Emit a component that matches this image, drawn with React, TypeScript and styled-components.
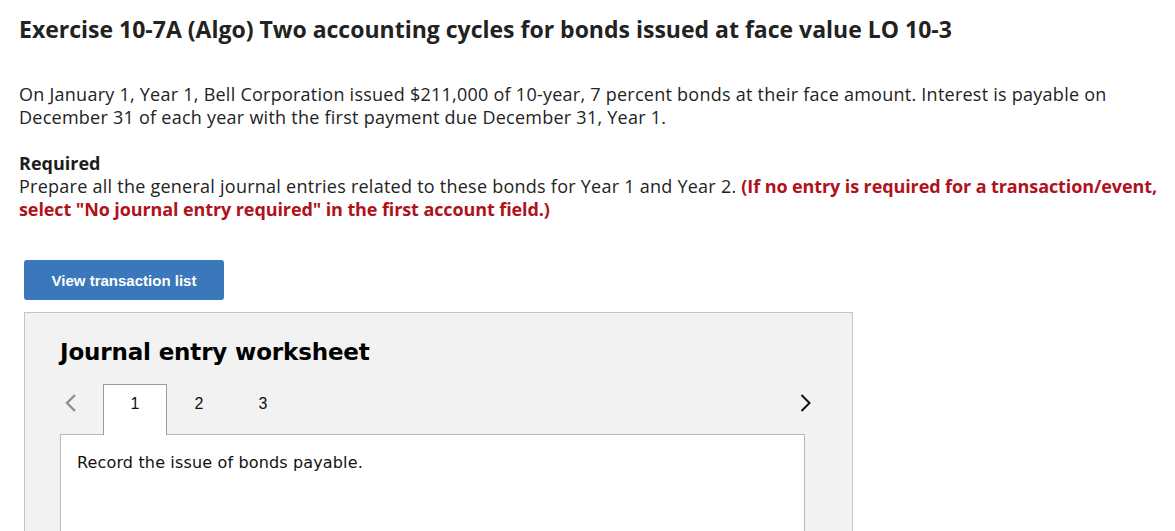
import React from "react";
import styled, { createGlobalStyle } from "styled-components";

const GlobalStyle = createGlobalStyle`
  html, body {
    margin: 0;
    padding: 0;
    background: #ffffff;
  }
  body {
    font-family: "Open Sans", "Lato", sans-serif;
    color: #1f1f1f;
  }
`;

const App: React.FC = () => {
  return (
    <>
      <GlobalStyle />
      <Page>
        <Title>Exercise 10-7A (Algo) Two accounting cycles for bonds issued at face value LO 10-3</Title>

        <Intro>
          On January 1, Year 1, Bell Corporation issued $211,000 of 10-year, 7 percent bonds at their face amount. Interest is payable on
          December 31 of each year with the first payment due December 31, Year 1.
        </Intro>

        <Required>
          <RequiredLabel>Required</RequiredLabel>
          Prepare all the general journal entries related to these bonds for Year 1 and Year 2.{" "}
          <Note>
            (If no entry is required for a transaction/event, select "No journal entry required" in the first account field.)
          </Note>
        </Required>

        <ListButton type="button">View transaction list</ListButton>

        <Worksheet>
          <WorksheetTitle>Journal entry worksheet</WorksheetTitle>

          <TabRow>
            <Arrow $muted aria-label="Previous">
              <svg width="13" height="20" viewBox="0 0 13 20">
                <path d="M11 2 L3 10 L11 18" fill="none" stroke="currentColor" strokeWidth="2.4" />
              </svg>
            </Arrow>
            <Tabs>
              <Tab $active>1</Tab>
              <Tab>2</Tab>
              <Tab>3</Tab>
            </Tabs>
            <Arrow aria-label="Next">
              <svg width="13" height="20" viewBox="0 0 13 20">
                <path d="M2.5 2 L10.5 10 L2.5 18" fill="none" stroke="currentColor" strokeWidth="2" />
              </svg>
            </Arrow>
          </TabRow>

          <EntryBox>
            <EntryText>Record the issue of bonds payable.</EntryText>
          </EntryBox>
        </Worksheet>
      </Page>
    </>
  );
};

const Page = styled.main`
  padding: 15px 0 0 19px;
`;

const Title = styled.h1`
  margin: 0;
  font-size: 23px;
  font-weight: 700;
  line-height: 29px;
  color: #222222;
`;

const Intro = styled.p`
  margin: 39px 0 0;
  font-size: 18px;
  line-height: 23px;
  letter-spacing: 0.25px;
  color: #232323;
`;

const Required = styled.p`
  margin: 23px 0 0;
  font-size: 18px;
  line-height: 23px;
  letter-spacing: 0.25px;
  color: #232323;
`;

const RequiredLabel = styled.strong`
  display: block;
  font-weight: 700;
  letter-spacing: 0;
  color: #1c1c1c;
`;

const Note = styled.strong`
  font-weight: 700;
  letter-spacing: -0.1px;
  color: #b0121b;
`;

const ListButton = styled.button`
  display: block;
  margin: 39px 0 0 5px;
  width: 200px;
  height: 40px;
  border: none;
  border-radius: 3px;
  background: #3a77bb;
  color: #ffffff;
  font-family: "Liberation Sans", Arial, sans-serif;
  font-size: 15px;
  font-weight: 700;
  cursor: pointer;
`;

const Worksheet = styled.section`
  margin: 12px 0 0 5px;
  width: 829px;
  height: 240px;
  background: #f2f2f2;
  border: 1px solid #c4c4c4;
  border-bottom: none;
  padding: 25px 0 0 35px;
  box-sizing: border-box;
`;

const WorksheetTitle = styled.h2`
  margin: 0;
  font-family: "DejaVu Sans", Verdana, sans-serif;
  font-size: 23px;
  font-weight: 700;
  line-height: 28px;
  letter-spacing: -0.15px;
  color: #000000;
`;

const TabRow = styled.div`
  margin-top: 18px;
  display: flex;
  align-items: flex-start;
  width: 755px;
  height: 50px;
`;

const Arrow = styled.span<{ $muted?: boolean }>`
  display: flex;
  align-items: center;
  justify-content: center;
  width: 20px;
  height: 38px;
  color: ${(p) => (p.$muted ? "#8f8f8f" : "#111111")};
`;

const Tabs = styled.div`
  display: flex;
  flex: 1;
  margin-left: 23px;
`;

const Tab = styled.div<{ $active?: boolean }>`
  width: 64px;
  height: 51px;
  display: flex;
  justify-content: center;
  padding-top: 10px;
  box-sizing: border-box;
  font-family: "Liberation Sans", Arial, sans-serif;
  font-size: 16px;
  color: #111111;
  background: ${(p) => (p.$active ? "#ffffff" : "transparent")};
  border: 1px solid ${(p) => (p.$active ? "#9a9a9a" : "transparent")};
  border-bottom: none;
  position: relative;
  z-index: 1;
`;

const EntryBox = styled.div`
  width: 745px;
  height: 120px;
  box-sizing: border-box;
  background: #ffffff;
  border: 1px solid #b8b8b8;
  border-bottom: none;
  padding: 18px 0 0 16px;
`;

const EntryText = styled.p`
  margin: 0;
  font-family: "DejaVu Sans", Verdana, sans-serif;
  font-size: 16px;
  line-height: 20px;
  letter-spacing: 0.15px;
  color: #111111;
`;

export default App;
